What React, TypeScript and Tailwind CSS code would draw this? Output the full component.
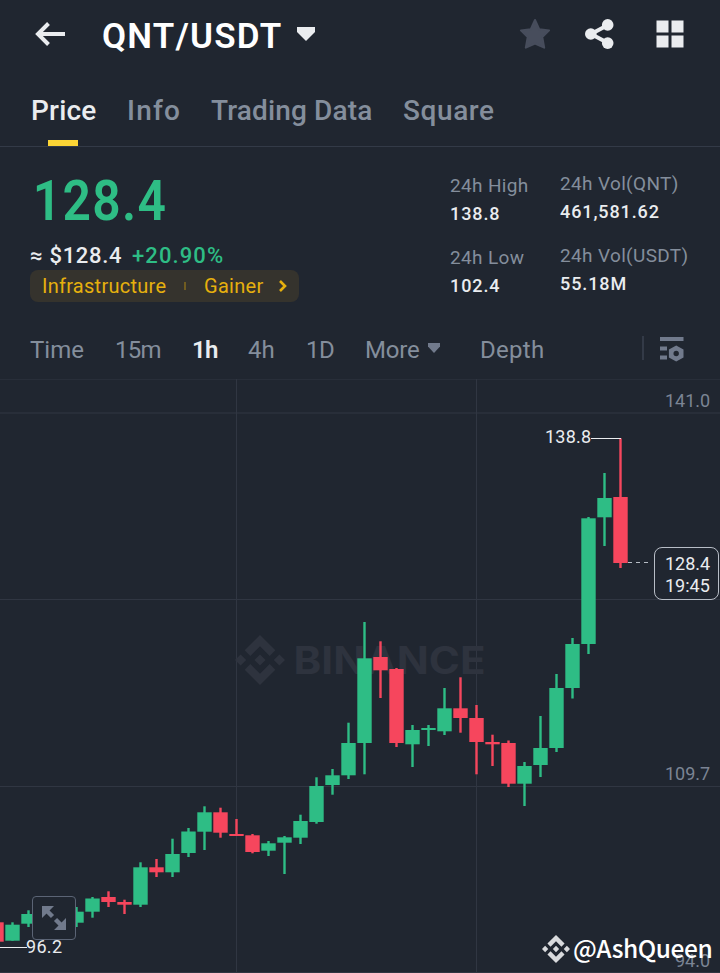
import React from 'react';

type Candle = { x: number; high: number; top: number; bottom: number; low: number; up: boolean };

const up = (x: number, high: number, top: number, bottom: number, low: number): Candle => ({ x, high, top, bottom, low, up: true });
const down = (x: number, high: number, top: number, bottom: number, low: number): Candle => ({ x, high, top, bottom, low, up: false });

const candles: Candle[] = [
  down(-3.5, 922.3, 922.3, 941.7, 941.7),
  up(12.5, 922.3, 924.7, 940.7, 940.7),
  up(28.5, 910.3, 914, 923.7, 927),
  up(76.5, 907, 911.7, 922.7, 927),
  up(92.5, 897, 898.5, 911.7, 917.7),
  down(108.5, 891.3, 897, 902, 907),
  down(124.5, 899.7, 902, 904.7, 914),
  up(140.5, 862.3, 867.3, 904.7, 907),
  down(156.5, 859, 867.3, 872.3, 877),
  up(172.5, 838.7, 854, 872.3, 877),
  up(188.5, 828, 831.5, 853, 857),
  up(204.5, 806.3, 812.3, 831.7, 850),
  down(220.5, 807.7, 812.3, 832.7, 837.7),
  down(236.5, 819, 834, 836, 836),
  down(252.5, 834, 835.3, 852, 853.3),
  up(268.5, 841, 843.3, 850.7, 856),
  up(284.5, 836, 837.3, 842.7, 874),
  up(300.5, 814.7, 821, 837.7, 844),
  up(316.5, 777.3, 786, 822, 823.7),
  up(332.5, 769, 775.3, 785, 794.7),
  up(348.5, 722.7, 743, 775.3, 779),
  up(364.5, 622, 658.3, 743, 774.3),
  down(380.5, 641.3, 657, 670.3, 698),
  down(396.5, 668, 669, 743, 747),
  up(412.5, 725, 730, 744.3, 767),
  up(428.5, 725, 728, 730, 746),
  up(444.5, 688, 708.3, 731.3, 735),
  down(460.5, 677.3, 708.3, 718, 732.7),
  down(476.5, 705, 718, 742, 774.3),
  down(492.5, 734.7, 742, 744.3, 766),
  down(508.5, 740.5, 743, 783.7, 787),
  up(524.5, 762, 766, 783.7, 806),
  up(540.5, 716, 748, 765, 777),
  up(556.5, 674, 688, 748, 752),
  up(572.5, 638, 644, 688, 698.5),
  up(588.5, 517, 518.3, 644, 654),
  up(604.5, 473, 498, 517.3, 546),
  down(620.5, 438.3, 497, 563, 568),
];

function BinanceMark({ className }: { className: string }) {
  return (
    <svg viewBox="0 0 50 50" className={className} fill="currentColor">
      <path d="M25 0 40.3 15.3 34.7 20.9 25 11.2 15.3 20.9 9.7 15.3Z" />
      <path d="M25 50 40.3 34.7 34.7 29.1 25 38.8 15.3 29.1 9.7 34.7Z" />
      <path d="M5.6 19.4 11.2 25 5.6 30.6 0 25ZM25 19.4 30.6 25 25 30.6 19.4 25ZM44.4 19.4 50 25 44.4 30.6 38.8 25Z" />
    </svg>
  );
}

function Header() {
  return (
    <header className="flex h-[70px] items-center pl-[35px] pr-[36px] text-[#eaecef]">
      <svg width="31" height="26" viewBox="0 0 31 26" className="-mt-0.5" fill="none" stroke="currentColor" strokeWidth="4">
        <path d="M30 13H3M13.5 2.5 3 13l10.5 10.5" />
      </svg>
      <h1 className="ml-[36px] mt-[3px] w-[180px] whitespace-nowrap text-[35px] font-semibold leading-[48px] tracking-[1.2px] text-white">QNT/USDT</h1>
      <svg width="18" height="14" viewBox="0 0 18 14" className="-mt-0.5 ml-[15px]" fill="currentColor">
        <path d="M0 0h18v5L9 14 0 5Z" />
      </svg>
      <div className="-mt-0.5 ml-auto flex items-center">
        <svg width="32" height="32" viewBox="0 0 32 32" className="text-[#474d5c]" fill="currentColor" stroke="currentColor" strokeWidth="2" strokeLinejoin="round">
          <path d="m16 2 4.3 9.3 9.8 1.1-6.8 6.7 1.9 10.6L16 25.5l-9.2 4.2 1.9-10.6L1.9 12.4l9.8-1.1Z" />
        </svg>
        <svg width="30" height="32" viewBox="0 0 30 32" className="ml-[34px]" fill="currentColor">
          <path d="M6 16 23 7M6 16l17 9" stroke="currentColor" strokeWidth="4" />
          <circle cx="5.8" cy="16" r="5.8" />
          <circle cx="22.7" cy="6.9" r="5.8" />
          <circle cx="22.7" cy="25.1" r="5.8" />
        </svg>
        <svg width="28" height="28" viewBox="0 0 28 28" className="ml-[41px]" fill="currentColor">
          <path d="M.5.500h12v12H.5ZM15.500.500h12v12h-12ZM.5 15.500h12v12H.5ZM15.500 15.500h12v12h-12Z" />
        </svg>
      </div>
    </header>
  );
}

function Tabs() {
  return (
    <nav className="flex h-[77px] items-start border-b border-[#333a47] pl-[31px] pt-[21px] text-[28px] font-medium leading-10 text-[#848e9c]">
      <div className="relative h-full w-[96px] tracking-[0.2px] text-[#eaecef]">
        Price
        <span className="absolute bottom-0 left-[17px] h-1.5 w-[30px] bg-[#fcd535]" />
      </div>
      <span className="w-[84px] tracking-[1.2px]">Info</span>
      <span className="w-[192px] whitespace-nowrap tracking-[0.15px]">Trading Data</span>
      <span className="tracking-[0.6px]">Square</span>
    </nav>
  );
}

function Stat({ label, value }: { label: string; value: string }) {
  return (
    <div className="h-[72px] whitespace-nowrap">
      <div className="text-[19px] leading-7 tracking-[0.35px] text-[#848e9c]">{label}</div>
      <div className="text-[18px] font-medium leading-7 tracking-[0.9px] text-[#eaecef]">{value}</div>
    </div>
  );
}

function Summary() {
  return (
    <section className="flex h-[174px]">
      <div className="w-[449px] pl-[30px]">
        <div className="mt-[22px] h-[65px] w-[150px] origin-left scale-x-[0.89] pl-[3px] text-[56px] font-semibold leading-[64px] tracking-[1.5px] text-[#2ebd85]">128.4</div>
        <div className="mt-[6px] flex h-[30px] items-center whitespace-nowrap text-[22px] font-medium">
          <span className="w-[102px] tracking-[0.7px] text-[#eaecef]">≈ $128.4</span>
          <span className="tracking-[1.1px] text-[#2ebd85]">+20.90%</span>
        </div>
        <div className="flex h-8 w-[269px] items-center rounded-lg bg-[#35332d] pl-3 text-[20px] text-[#e6b00e]">
          <span className="w-[142px] tracking-[0.26px]">Infrastructure</span>
          <span className="h-2 w-0.5 bg-[#705c20]" />
          <span className="ml-[18px] w-[75px] tracking-[0.3px]">Gainer</span>
          <svg width="8" height="12" viewBox="0 0 8 12" fill="none" stroke="currentColor" strokeWidth="2.6">
            <path d="m1 1 5 5-5 5" />
          </svg>
        </div>
      </div>
      <div className="w-[111px] pl-px pt-[25px]">
        <Stat label="24h High" value="138.8" />
        <Stat label="24h Low" value="102.4" />
      </div>
      <div className="pt-[23px]">
        <Stat label="24h Vol(QNT)" value="461,581.62" />
        <Stat label="24h Vol(USDT)" value="55.18M" />
      </div>
    </section>
  );
}

function Intervals() {
  return (
    <div className="flex h-[58px] items-center whitespace-nowrap pl-[30px] text-[24px] text-[#848e9c]">
      <span className="w-[85px]">Time</span>
      <span className="w-[77px] tracking-[-0.7px]">15m</span>
      <span className="w-[56px] font-semibold tracking-[-0.8px] text-[#eaecef]">1h</span>
      <span className="w-[58px]">4h</span>
      <span className="w-[59px] tracking-[-0.5px]">1D</span>
      <span className="w-[63px] tracking-[-0.2px]">More</span>
      <svg width="12" height="10" viewBox="0 0 12 10" className="-mt-1" fill="#717a8c">
        <path d="M0 0h12v3.5L6 10 0 3.5Z" />
      </svg>
      <span className="ml-[40px] w-[162px] tracking-[0.3px]">Depth</span>
      <span className="-mt-1 h-6 w-0.5 bg-[#333a47]" />
      <svg width="24" height="25" viewBox="0 0 24 25" className="-mt-0.5 ml-[16px]" fill="#717a8c">
        <path d="M0 0h23.5v4H0ZM0 9.5h7v4H0ZM0 18.5h7v4H0Z" />
        <path fillRule="evenodd" d="m16.2 8.5 7.3 4v8l-7.3 4-7.3-4v-8ZM16.2 13.8a2.7 2.7 0 1 0 0 5.4 2.7 2.7 0 0 0 0-5.4Z" />
      </svg>
    </div>
  );
}

function Chart() {
  return (
    <section className="relative h-[594px] overflow-hidden font-[Roboto,sans-serif] text-[#eaecef]">
      <svg width="720" height="594" viewBox="0 379 720 594" className="block">
        <path d="M0 379H720M0 413H720M0 599.5H720M0 786.5H720M0 972.5H720M236.5 379V973M476.5 379V973" stroke="#303642" fill="none" />
        <g fill="#2e333e" transform="translate(235 635)">
          <path d="M25 0 40.3 15.3 34.7 20.9 25 11.2 15.3 20.9 9.7 15.3ZM25 50 40.3 34.7 34.7 29.1 25 38.8 15.3 29.1 9.7 34.7Z" />
          <path d="M5.6 19.4 11.2 25 5.6 30.6 0 25ZM25 19.4 30.6 25 25 30.6 19.4 25ZM44.4 19.4 50 25 44.4 30.6 38.8 25Z" />
        </g>
        <text x="293.5" y="673.5" fill="#2e333e" fontFamily="Inter" fontSize="38" fontWeight="700" textLength="192" lengthAdjust="spacingAndGlyphs">BINANCE</text>
        {candles.map((c) => (
          <g key={c.x} fill={c.up ? '#2ebd85' : '#f6465d'}>
            <rect x={c.x - 1.2} y={c.high} width="2.4" height={c.low - c.high} />
            <rect x={c.x - 7.2} y={c.top} width="14.4" height={c.bottom - c.top} />
          </g>
        ))}
        <path d="M591 438.5h30M0 947.5h27" stroke="#eaecef" />
        <path d="M628 562.5h21" stroke="#b7bdc6" strokeDasharray="4 4" />
        <g fontSize="18" fill="#eaecef">
          <text x="545" y="443" textLength="46">138.8</text>
          <text x="26" y="953" textLength="36">96.2</text>
        </g>
        <g fontSize="18" fill="#7b8494">
          <text x="665" y="407" textLength="45">141.0</text>
          <text x="665" y="780" textLength="45">109.7</text>
          <text x="675" y="967" textLength="35">94.0</text>
        </g>
      </svg>
      <div className="absolute left-[654px] top-[168px] h-[53px] w-[65px] rounded-lg border border-[#b7bdc6] bg-[#202630] pl-[10px] pt-[5px] text-[18px] leading-[22px]">
        128.4
        <br />
        19:45
      </div>
      <div className="absolute left-[32px] top-[517px] flex size-11 items-center justify-center rounded border border-[#5b6475] bg-[#202630]">
        <svg width="24" height="24" viewBox="0 0 24 24" fill="#717a8c">
          <path d="M0 0h12L0 12ZM24 24H12L24 12Z" />
          <path d="m4 4 6.5 6.5M20 20l-6.5-6.5" stroke="#717a8c" strokeWidth="4.4" />
        </svg>
      </div>
      <div className="absolute left-[542px] top-[549px] flex items-center whitespace-nowrap font-['Noto_Sans_CJK_SC',sans-serif] text-[24.5px] font-medium leading-10 text-white">
        <BinanceMark className="mr-[3px] mt-0.5 size-7 text-[#d9dadd]" />
        <span className="tracking-[-0.45px]">@AshQueen</span>
      </div>
    </section>
  );
}

export default function App() {
  return (
    <main className="h-[973px] w-[720px] overflow-hidden bg-[#202630] font-[Roboto,sans-serif]">
      <Header />
      <Tabs />
      <Summary />
      <Intervals />
      <Chart />
    </main>
  );
}
